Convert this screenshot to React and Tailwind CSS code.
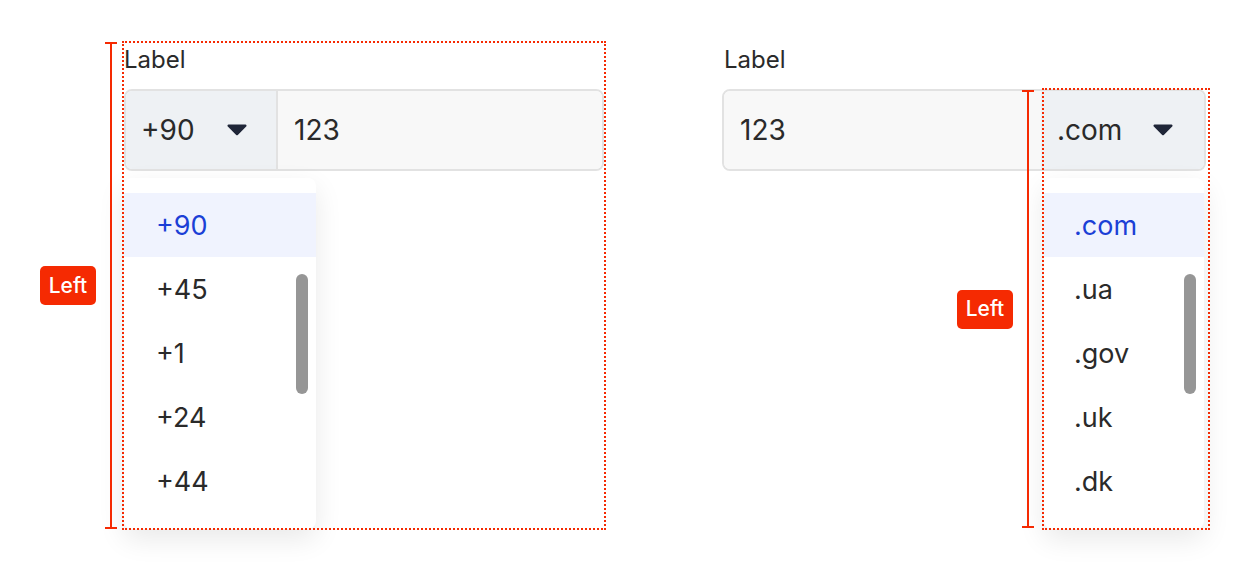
import { useState } from "react";

const font = { fontFamily: "Inter, 'Noto Sans', sans-serif" };

function Caret() {
  return (
    <svg width="20" height="12" viewBox="0 0 20 12" className="shrink-0">
      <path
        d="M1.6 0.5h16.8a1.1 1.1 0 0 1 .8 1.9l-8.4 8.5a1.1 1.1 0 0 1-1.6 0L.8 2.4A1.1 1.1 0 0 1 1.6.5z"
        fill="#1f2638"
      />
    </svg>
  );
}

function Menu({ items, className, itemClass }) {
  return (
    <div
      className={`relative flex h-[351px] flex-col rounded-lg bg-white pt-[15px] shadow-[0_10px_28px_rgba(0,0,0,0.09)] ${className}`}
    >
      {items.map((it, i) => (
        <div
          key={it}
          className={`flex h-16 items-center pt-[3px] text-[27px] ${itemClass} ${
            i === 0 ? "bg-[#f0f3fe] text-[#1b3fd6]" : "text-[#2a2a2a]"
          }`}
        >
          {it}
        </div>
      ))}
      {/* scrollbar thumb */}
      <div className="absolute right-2 top-[96px] h-[120px] w-3 rounded-full bg-[#969696]" />
    </div>
  );
}

// red measuring line with its "Left" tag, laid over the example
function Measure({ className }) {
  return (
    <div className={`absolute inset-y-0 flex items-center ${className}`}>
      <div className="absolute right-[16px] flex h-[39px] w-[56px] items-center justify-center rounded-[5px] bg-[#f52a02] text-[21px] font-medium text-white">
        Left
      </div>
      <div className="relative h-full w-[2px] bg-[#f52a02]">
        <div className="absolute -left-[5px] top-0 h-[2px] w-3 bg-[#f52a02]" />
        <div className="absolute -left-[5px] bottom-0 h-[2px] w-3 bg-[#f52a02]" />
      </div>
    </div>
  );
}

export default function App() {
  const [code] = useState("+90");
  return (
    <div className="flex h-[572px] w-[1252px] items-start gap-[118px] bg-white pl-[124px] pt-[42px] text-[#2a2a2a]" style={font}>
      {/* Left addon example */}
      <div className="relative flex w-[480px] flex-col">
        <div className="h-[47px] pt-[6px] text-[24px] leading-none">Label</div>
        <div className="flex h-[82px] overflow-hidden rounded-lg border-2 border-[#e2e2e2]">
          <div className="flex w-[152px] items-center justify-between border-r-2 border-[#e2e2e2] bg-[#eef1f4] pl-[15px] pr-[29px] text-[28px]">
            {code}
            <Caret />
          </div>
          <div className="flex flex-1 items-center bg-[#f8f8f8] pl-[16px] text-[28px]">123</div>
        </div>
        <Menu items={["+90", "+45", "+1", "+24", "+44"]} className="mt-[7px] w-[192px]" itemClass="pl-[32px]" />
        <div className="pointer-events-none absolute -inset-x-[2px] -top-[1px] -bottom-[1px] border-2 border-dotted border-[#f52a02]" />
        <Measure className="-left-[14px]" />
      </div>

      {/* Right addon example */}
      <div className="flex w-[484px] flex-col">
        <div className="h-[47px] pt-[6px] pl-[2px] text-[24px] leading-none">Label</div>
        <div className="relative flex flex-col">
          <div className="flex h-[82px] overflow-hidden rounded-lg border-2 border-[#e2e2e2]">
            <div className="flex flex-1 items-center bg-[#f8f8f8] pl-[16px] text-[28px]">123</div>
            <div className="flex w-[163px] items-center justify-between bg-[#eef1f4] pl-[16px] pr-[31px] text-[28px]">
              .com
              <Caret />
            </div>
          </div>
          <div className="flex justify-end pr-[2px]">
            <Menu items={[".com", ".ua", ".gov", ".uk", ".dk"]} className="mt-[7px] w-[160px]" itemClass="pl-[30px]" />
          </div>
          <div className="pointer-events-none absolute -right-[4px] -top-[1px] -bottom-[1px] w-[168px] border-2 border-dotted border-[#f52a02]">
            <Measure className="-left-[17px]" />
          </div>
        </div>
      </div>
    </div>
  );
}
